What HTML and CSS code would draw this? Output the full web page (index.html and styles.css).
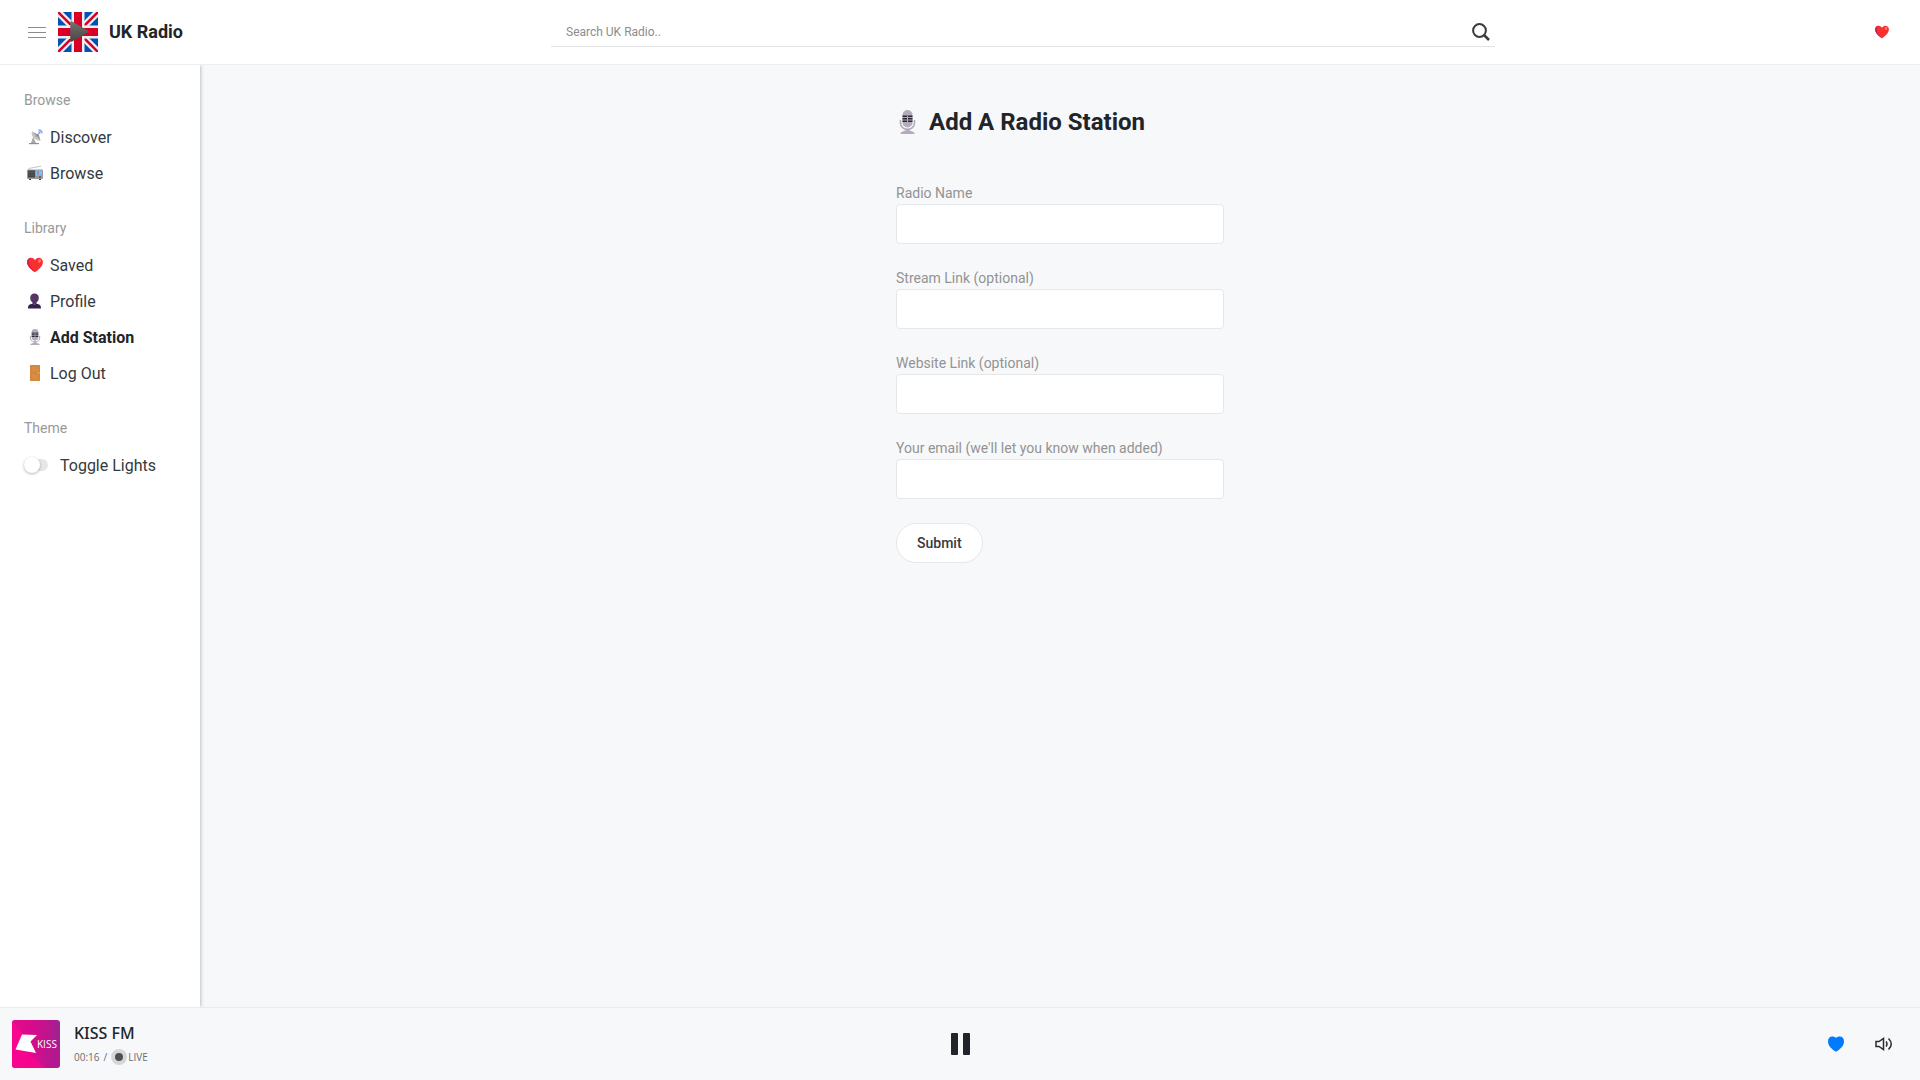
FILE: index.html
```html
<!DOCTYPE html>
<html lang="en">
<head>
  <meta charset="UTF-8">
  <meta name="viewport" content="width=device-width, initial-scale=1">
  <title>UK Radio</title>
  <link rel="stylesheet" href="styles.css">
</head>
<body>
  <!-- shared icons -->
  <svg class="sprite" aria-hidden="true">
    <symbol id="heart" viewBox="0 0 16 16">
      <path fill="#f92f30" d="M8 15.2C5.600 13.600 0.200 9.800 0.100 5.200C0 2.500 2 0.800 4.100 0.800C6 0.800 7.400 1.900 8 3.400C8.600 1.900 10 0.800 11.900 0.800C14 0.800 16 2.500 15.900 5.200C15.800 9.800 10.400 13.600 8 15.200Z"/>
      <path fill="#d71850" d="M8 15.2C5.600 13.600 0.200 9.800 0.100 5.200C0 2.500 2 0.800 4.100 0.800C1.800 2 1.500 4.300 2 6.300C2.800 9.800 5.500 12.500 8 15.200Z"/>
      <ellipse cx="12.600" cy="3.900" rx="1.300" ry="2" transform="rotate(30 12.600 3.900)" fill="#ff7a72"/>
    </symbol>
    <symbol id="mic" viewBox="0 0 16 24">
      <path d="M1 10v3a7 6.500 0 0 0 14 0v-3" fill="none" stroke="#b4acbc" stroke-width="1.600"/>
      <rect x="3" y="0" width="10" height="17.500" rx="5" fill="#b4acbc"/>
      <path d="M3 6.200h10M3 8.700h10M3 11.200h10" stroke="#2a2630" stroke-width="1.500"/>
      <path d="M8 5.500v6.500" stroke="#b4acbc" stroke-width="1"/>
      <path d="M6 18.500h4v2l4 1.500q1 .5 1 2H1q0-1.500 1-2l4-1.500z" fill="#b4acbc"/>
    </symbol>
  </svg>

  <header class="header">
    <div class="brand">
      <button class="menu-btn" aria-label="Menu"><span></span><span></span><span></span></button>
      <a class="brand-link" href="#">
        <svg class="brand-logo" viewBox="0 0 40 40" aria-hidden="true">
          <defs>
            <linearGradient id="play" x1="0" y1="0" x2="0" y2="1">
              <stop offset="0" stop-color="#72706c"/>
              <stop offset="1" stop-color="#4a4946"/>
            </linearGradient>
          </defs>
          <rect width="40" height="40" fill="#0052b4"/>
          <path d="M0 0L40 40M40 0L0 40" stroke="#f0f0f0" stroke-width="7"/>
          <path d="M0 0L15 15M40 40L25 25M40 0L25 15M0 40L15 25" stroke="#d80027" stroke-width="2.500"/>
          <path d="M20 0v40M0 20h40" stroke="#f0f0f0" stroke-width="13"/>
          <path d="M20 0v40M0 20h40" stroke="#d80027" stroke-width="8"/>
          <path d="M13.500 10.500L29 19.500L13.500 28.500Z" fill="url(#play)" stroke="url(#play)" stroke-width="2.500" stroke-linejoin="round"/>
        </svg>
        <span class="brand-name">UK Radio</span>
      </a>
    </div>
    <form class="search">
      <input type="text" placeholder="Search UK Radio.." aria-label="Search UK Radio">
      <button type="submit" aria-label="Search">
        <svg width="18" height="18" viewBox="0 0 18 18" fill="none" stroke="#3a3b3d">
          <circle cx="7.500" cy="7.500" r="6.400" stroke-width="2"/>
          <path d="M12 12l5 5" stroke-width="2.500"/>
        </svg>
      </button>
    </form>
    <a class="header-saved" href="#" aria-label="Saved"><svg width="14" height="14"><use href="#heart"/></svg></a>
  </header>

  <div class="content">
    <nav class="sidebar">
      <section>
        <h2>Browse</h2>
        <a href="#">
          <svg viewBox="0 0 16 16" aria-hidden="true">
            <path d="M6 8L4 14h5z" fill="#a8a8a8"/>
            <path d="M2 15.200h10v-1.200H2z" fill="#8f8f8f"/>
            <path d="M5 2.500C3.500 6 7 11.500 13.500 12L9.500 7.500Z" fill="#c4c4c4"/>
            <path d="M5 2.500L13.500 12L12 6Z" fill="#9c9c9c"/>
            <path d="M9 7.500L13 3.500" stroke="#777" stroke-width="1"/>
            <path d="M11.500 1q3.500 0 3.500 3.500M11.500 3q1.500 0 1.500 1.500" fill="none" stroke="#73a5fa" stroke-width="1.300"/>
          </svg>
          Discover
        </a>
        <a href="#">
          <svg viewBox="0 0 16 16" aria-hidden="true">
            <path d="M1.500 3.500L14 1.200" stroke="#b5b5b5" stroke-width=".8"/>
            <path d="M2 13h2v2H2zM12 13h2v2h-2z" fill="#3c3c3c"/>
            <rect x="0" y="4.500" width="16" height="9.500" rx="1" fill="#9a9a9a"/>
            <rect x="1" y="5.500" width="7" height="7" fill="#454545"/>
            <path d="M1 7.500h7M1 10h7" stroke="#666" stroke-width=".6"/>
            <rect x="9" y="5.500" width="6" height="5" fill="#74c4f5"/>
            <path d="M11 6v4" stroke="#f04860" stroke-width="1"/>
            <circle cx="13" cy="12" r="1" fill="#555"/>
          </svg>
          Browse
        </a>
      </section>
      <section>
        <h2>Library</h2>
        <a href="#"><svg aria-hidden="true"><use href="#heart"/></svg>Saved</a>
        <a href="#">
          <svg viewBox="0 0 16 16" aria-hidden="true">
            <path fill="#533566" d="M7.500 0.500C4.800 0.500 3.200 2.200 3.200 4.800C3.200 7 4 8.300 5.500 9.500V11.500H9.500V9.500C11 8.300 11.800 7 11.800 4.800C11.800 2.200 10.200 0.500 7.500 0.500Z"/>
            <path fill="#35204a" d="M1 15.500C1 12 2.500 11.200 5.500 10.800Q7.500 12 9.500 10.800C12.500 11.200 14 12 14 15.500Z"/>
          </svg>
          Profile
        </a>
        <a class="active" href="#"><svg aria-hidden="true"><use href="#mic"/></svg>Add Station</a>
        <a href="#">
          <svg viewBox="0 0 16 16" aria-hidden="true">
            <rect x="3" y="0" width="10" height="16" rx=".6" fill="#d3883e"/>
            <path d="M4.500 1.500h7v5.500h-7zM4.500 9h7v5.500h-7z" fill="#da8c44" stroke="#cf8439" stroke-width=".5"/>
            <circle cx="11.500" cy="7.800" r=".8" fill="#f9c23c"/>
          </svg>
          Log Out
        </a>
      </section>
      <section>
        <h2>Theme</h2>
        <label class="toggle"><input type="checkbox">Toggle Lights</label>
      </section>
    </nav>

    <main class="main">
      <form class="station-form">
        <h1><svg aria-hidden="true"><use href="#mic"/></svg>Add A Radio Station</h1>
        <div class="field">
          <label for="name">Radio Name</label>
          <input id="name" type="text">
        </div>
        <div class="field">
          <label for="stream">Stream Link (optional)</label>
          <input id="stream" type="text">
        </div>
        <div class="field">
          <label for="website">Website Link (optional)</label>
          <input id="website" type="text">
        </div>
        <div class="field">
          <label for="email">Your email (we'll let you know when added)</label>
          <input id="email" type="email">
        </div>
        <button class="submit" type="submit">Submit</button>
      </form>
    </main>
  </div>

  <footer class="player">
    <div class="now-playing">
      <svg class="cover" viewBox="0 0 48 48" role="img" aria-label="KISS">
        <defs>
          <linearGradient id="kiss" x1="0" y1="0" x2="1" y2="0">
            <stop offset="0" stop-color="#f5078d"/>
            <stop offset=".4" stop-color="#e5078d"/>
            <stop offset="1" stop-color="#9c2390"/>
          </linearGradient>
        </defs>
        <rect width="48" height="48" fill="url(#kiss)"/>
        <path d="M0 0H27L48 28V48H35L18 24Z" fill="#c3108c" opacity=".35"/>
        <path d="M0 0L16 20V33L34 48H0Z" fill="#fa0590" opacity=".75"/>
        <path d="M10 14.500L25 15L18.500 21.500L24 33L3.500 29.500Z" fill="#fff"/>
        <text class="cover-text" x="25" y="27.500" fill="#fff">KISS</text>
      </svg>
      <div class="track">
        <div class="track-name">KISS FM</div>
        <div class="track-time"><span>00:16</span><span>/</span><span class="live"><i></i>LIVE</span></div>
      </div>
    </div>
    <button class="pause" aria-label="Pause">
      <svg width="20" height="22" viewBox="0 0 20 22" fill="#212529">
        <rect x="1" y="0" width="7" height="22" rx="1"/>
        <rect x="13" y="0" width="7" height="22" rx="1"/>
      </svg>
    </button>
    <div class="player-actions">
      <button aria-label="Save station">
        <svg width="16" height="16" viewBox="0 0 16 16">
          <path fill="#007bff" d="M8 15.800C5 14 0 10.500 0 5.500C0 2 1.800 .5 4.200 .5C6 .5 7.200 1 8 2C8.800 1 10 .5 11.800 .5C14.200 .5 16 2 16 5.500C16 10.500 11 14 8 15.800Z"/>
        </svg>
      </button>
      <button aria-label="Volume">
        <svg width="18" height="14" viewBox="0 0 18 14" fill="none" stroke="#2a2d30" stroke-width="1.500">
          <path d="M1 4.500h3L8.500 1.500v11L4 9.500H1z"/>
          <path d="M11 4.500q2 2.500 0 5M13.500 1.500q5.500 5.500 0 11"/>
        </svg>
      </button>
    </div>
  </footer>
</body>
</html>
```
FILE: styles.css
```css
* {
  box-sizing: border-box;
}

body {
  margin: 0;
  min-height: 100vh;
  display: flex;
  flex-direction: column;
  background: #f7f8fa;
  color: #212529;
  font-family: Roboto, "Liberation Sans", sans-serif;
  font-size: 16px;
}

a {
  color: inherit;
  text-decoration: none;
}

button {
  border: 0;
  padding: 0;
  background: none;
  color: inherit;
  font-family: inherit;
  cursor: pointer;
}

svg {
  display: block;
}

.sprite {
  width: 0;
  height: 0;
  position: absolute;
}

/* header */
.header {
  display: grid;
  grid-template-columns: 551fr 944fr 425fr;
  align-items: center;
  height: 65px;
  background: #fff;
  border-bottom: 1px solid #eceef0;
}

.brand,
.brand-link {
  display: flex;
  align-items: center;
}

.brand {
  gap: 12px;
  padding-left: 28px;
}

.brand-link {
  gap: 11px;
}

.menu-btn {
  display: flex;
  flex-direction: column;
  gap: 4px;
  width: 18px;
}

.menu-btn span {
  height: 1px;
  background: #8c8c8c;
}

.brand-logo {
  width: 40px;
  height: 40px;
}

.brand-name {
  font-size: 18px;
  font-weight: 700;
  line-height: 22px;
}

.search {
  display: flex;
  align-items: center;
  height: 30px;
  border-bottom: 1px solid #e2e3e5;
}

.search input {
  flex: 1;
  border: 0;
  padding: 0 15px;
  outline: 0;
  background: none;
  font-family: inherit;
  font-size: 12px;
}

.search input::placeholder {
  color: #8c8c8c;
}

.search button {
  padding-right: 5px;
}

.header-saved {
  justify-self: end;
  padding-right: 31px;
}

/* sidebar */
.content {
  flex: 1;
  display: flex;
}

.sidebar {
  width: 200px;
  display: flex;
  flex-direction: column;
  gap: 27px;
  padding: 25px 24px;
  background: #fff;
  box-shadow: 0 0 4px rgba(0, 0, 0, .35);
  clip-path: inset(0 -6px 0 0);
}

.sidebar h2 {
  margin: 0 0 9px;
  color: #999;
  font-size: 14px;
  font-weight: 400;
  line-height: 20px;
}

.sidebar a,
.toggle {
  display: flex;
  align-items: center;
  height: 36px;
  color: #343a40;
}

.sidebar a {
  gap: 7px;
  padding-left: 3px;
}

.sidebar a svg {
  width: 16px;
  height: 16px;
}

.sidebar a.active {
  color: #212529;
  font-weight: 700;
}

.toggle {
  gap: 12px;
  cursor: pointer;
}

.toggle input {
  appearance: none;
  display: flex;
  align-items: center;
  width: 24px;
  height: 12px;
  margin: 0;
  border-radius: 6px;
  background: #e4e6e8;
}

.toggle input::before {
  content: "";
  flex: none;
  width: 16px;
  height: 16px;
  border-radius: 50%;
  background: #fff;
  box-shadow: 0 1px 3px rgba(0, 0, 0, .3);
}

.toggle input:checked {
  justify-content: flex-end;
}

/* form */
.main {
  flex: 1;
  padding: 41px 24px;
}

.station-form {
  display: flex;
  flex-direction: column;
  gap: 24px;
  max-width: 328px;
  margin: 0 auto;
}

.station-form h1 {
  display: flex;
  align-items: center;
  gap: 10px;
  margin: 0 0 21px;
  font-size: 24px;
  font-weight: 700;
  line-height: 32px;
}

.station-form h1 svg {
  width: 23px;
  height: 24px;
}

.field label {
  display: block;
  color: #939393;
  font-size: 14px;
  line-height: 21px;
}

.field input {
  display: block;
  width: 100%;
  height: 40px;
  padding: 0 12px;
  border: 1px solid #e6e7e9;
  border-radius: 4px;
  background: #fff;
  font: inherit;
}

.submit {
  align-self: flex-start;
  height: 40px;
  padding: 0 20px;
  border: 1px solid #e6e7e9;
  border-radius: 20px;
  background: #fff;
  color: #343a40;
  font-size: 14px;
  font-weight: 500;
}

/* player */
.player {
  display: grid;
  grid-template-columns: 1fr auto 1fr;
  align-items: center;
  height: 73px;
  padding: 0 12px;
  border-top: 1px solid #e9ebed;
  background: #f7f8fa;
  font-family: "Open Sans", "Noto Sans", sans-serif;
}

.now-playing {
  display: flex;
  align-items: center;
  gap: 14px;
}

.cover {
  width: 48px;
  height: 48px;
  border-radius: 3px;
}

.cover-text {
  font-size: 10px;
}

.track {
  padding-top: 2px;
}

.track-name {
  font-family: "Noto Sans", sans-serif;
  font-size: 16px;
  font-weight: 500;
  line-height: 24px;
}

.track-time {
  display: flex;
  align-items: center;
  gap: 4px;
  color: #6a6d70;
  font-size: 10px;
  line-height: 24px;
}

.live {
  display: flex;
  align-items: center;
  gap: 1px;
}

.live i {
  width: 16px;
  height: 16px;
  border: 4px solid #d5d6d8;
  border-radius: 50%;
  background: #4c5054;
}

.player-actions {
  display: flex;
  align-items: center;
  justify-content: flex-end;
  gap: 31px;
  padding-right: 15px;
}
```
